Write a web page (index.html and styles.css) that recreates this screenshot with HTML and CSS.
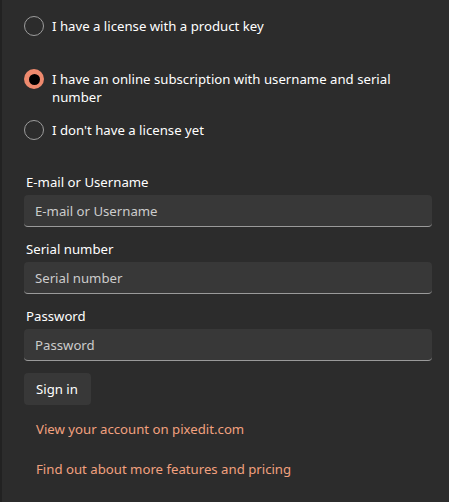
FILE: index.html
```html
<!DOCTYPE html>
<html>
<head>
<meta charset="utf-8">
<link rel="stylesheet" href="styles.css">
</head>
<body>
<div class="page">
  <div class="radios">
    <div class="radio-row first">
      <span class="radio"></span>
      <span class="radio-text">I have a license with a product key</span>
    </div>
    <div class="radio-row second">
      <span class="radio checked"></span>
      <span class="radio-text">I have an online subscription with username and serial number</span>
    </div>
    <div class="radio-row third">
      <span class="radio"></span>
      <span class="radio-text">I don't have a license yet</span>
    </div>
  </div>
  <div class="form">
    <label class="field-label first-label">E-mail or Username</label>
    <div class="input">E-mail or Username</div>
    <label class="field-label">Serial number</label>
    <div class="input">Serial number</div>
    <label class="field-label">Password</label>
    <div class="input">Password</div>
    <div class="button-row"><span class="button">Sign in</span></div>
    <a class="link first-link">View your account on pixedit.com</a>
    <a class="link">Find out about more features and pricing</a>
  </div>
</div>
</body>
</html>
```

FILE: styles.css
```css
html, body {
  margin: 0;
  padding: 0;
  background: #2c2c2c;
  height: 100%;
}
body {
  font-family: "Noto Sans", "Open Sans", sans-serif;
  font-size: 13.2px;
  color: #ffffff;
}
.page {
  min-height: 100%;
  box-sizing: border-box;
  border-left: 2px solid #222222;
  padding-left: 22px;
  padding-right: 17px;
}
.radios {
  display: flex;
  flex-direction: column;
}
.radio-row {
  display: flex;
  align-items: flex-start;
  gap: 8px;
}
.radio-row.first { margin-top: 16px; }
.radio-row.second { margin-top: 33px; }
.radio-row.third { margin-top: 14px; }
.radio {
  flex: 0 0 auto;
  width: 20px;
  height: 20px;
  box-sizing: border-box;
  border-radius: 50%;
  border: 1.5px solid #9c9c9c;
  position: relative;
}
.radio.checked {
  border: none;
  background: #ee8a6e;
}
.radio.checked::after {
  content: "";
  position: absolute;
  left: 4.5px;
  top: 4.5px;
  width: 11px;
  height: 11px;
  border-radius: 50%;
  background: #000000;
}
.radio-text {
  line-height: 18px;
  padding-top: 1px;
  padding-right: 40px;
}
.form {
  display: flex;
  flex-direction: column;
}
.field-label {
  display: block;
  line-height: 20px;
  margin-top: 12px;
  margin-bottom: 3px;
  padding-left: 2px;
}
.field-label.first-label { margin-top: 32px; }
.input {
  height: 32px;
  box-sizing: border-box;
  background: #383838;
  border-radius: 4px;
  border-bottom: 1px solid #9a9a9a;
  padding-left: 11px;
  line-height: 32px;
  color: #cccccc;
}
.button-row {
  display: flex;
  margin-top: 12px;
}
.button {
  height: 32px;
  box-sizing: border-box;
  padding: 0 13px 0 12px;
  line-height: 32px;
  background: #383838;
  border-radius: 4px;
  color: #ffffff;
}
.link {
  display: block;
  color: #f2a17f;
  line-height: 20px;
  padding-left: 12px;
  margin-top: 20px;
}
.link.first-link { margin-top: 14px; }
```
